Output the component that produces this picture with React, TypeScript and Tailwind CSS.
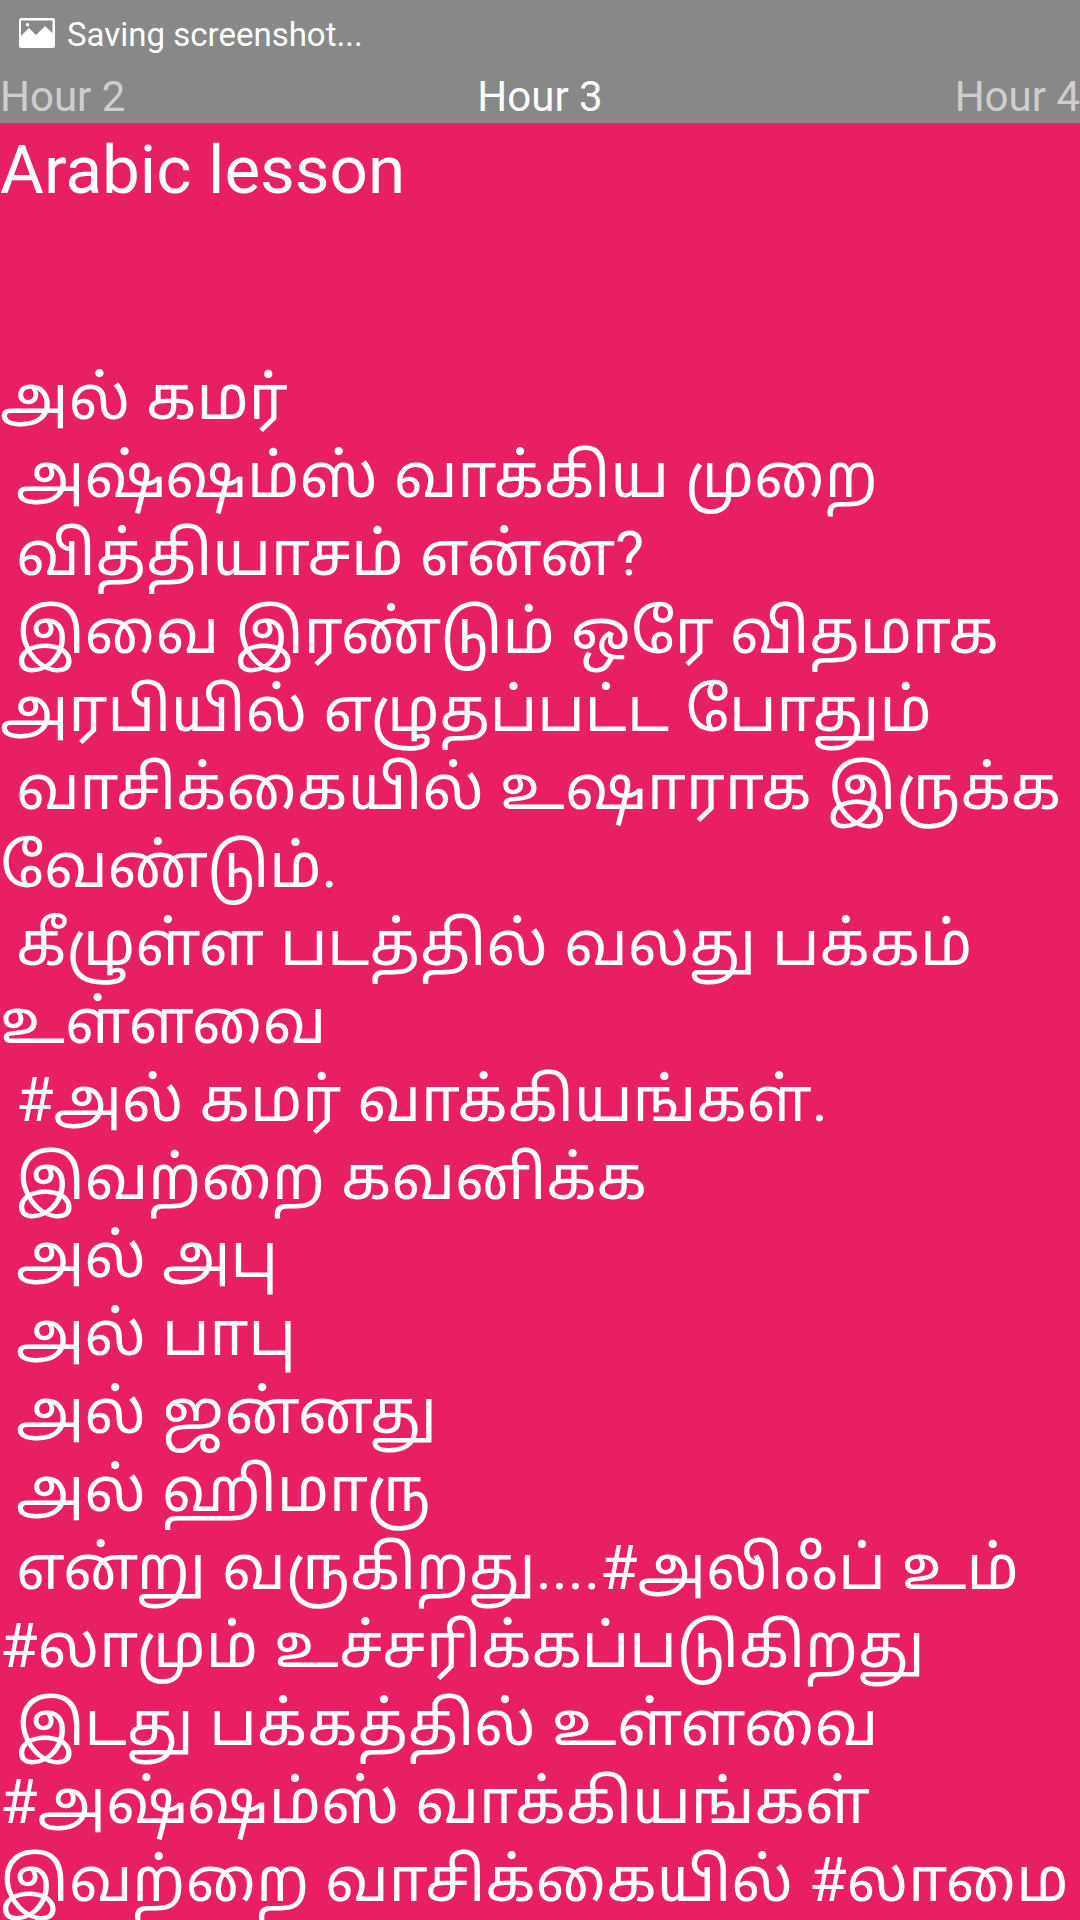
const lines = [
  "",
  "",
  "அல் கமர்",
  " அஷ்ஷம்ஸ் வாக்கிய முறை",
  " வித்தியாசம் என்ன?",
  " இவை இரண்டும் ஒரே விதமாக",
  "அரபியில் எழுதப்பட்ட போதும்",
  " வாசிக்கையில் உஷாராக இருக்க",
  "வேண்டும்.",
  " கீழுள்ள படத்தில் வலது பக்கம்",
  "உள்ளவை",
  " #அல் கமர் வாக்கியங்கள்.",
  " இவற்றை கவனிக்க",
  " அல் அபு",
  " அல் பாபு",
  " அல் ஜன்னது",
  " அல் ஹிமாரு",
  " என்று வருகிறது....#அலிஃப் உம்",
  "#லாமும் உச்சரிக்கப்படுகிறது",
  " இடது பக்கத்தில் உள்ளவை",
  "#அஷ்ஷம்ஸ் வாக்கியங்கள்",
  "இவற்றை வாசிக்கையில் #லாமை",
];

export default function App() {
  return (
    <div className="w-[1080px] h-[1920px] overflow-hidden bg-[#e81f62] text-white font-['Roboto','Noto_Sans','Noto_Sans_Tamil',sans-serif]">
      <div className="bg-[#888888] h-[123px] flex flex-col">
        <div className="h-[68px] flex items-center pl-[19px] gap-[12px] shrink-0">
          <svg width="36" height="30" viewBox="0 0 36 30" className="mt-[-2px]">
            <path fill="#fff" fillRule="evenodd" d="M2 0h32a2 2 0 0 1 2 2v26a2 2 0 0 1-2 2H2a2 2 0 0 1-2-2V2a2 2 0 0 1 2-2zm0 2.500v15.500l8-8 7 7-3 3 12-12 7.500 7V2.500H2zm6.500 2.500a1.800 1.800 0 1 1 0 3.600 1.800 1.800 0 0 1 0-3.600z" />
          </svg>
          <span className="text-[33px] leading-none">Saving screenshot...</span>
        </div>
        <div className="flex justify-between text-[42px] leading-none h-[58px] items-center mt-[2px]">
          <span className="text-white/60">Hour 2</span>
          <span>Hour 3</span>
          <span className="text-white/60">Hour 4</span>
        </div>
      </div>
      <div className="text-[67.3px] leading-[72px] mt-[11px] whitespace-pre">Arabic lesson</div>
      <div className="text-[61px] leading-[78px] [word-spacing:0.8px] whitespace-pre mt-[-3px]">
        {lines.map((l, i) => (
          <div key={i} className="h-[78px]">{l}</div>
        ))}
      </div>
    </div>
  );
}
